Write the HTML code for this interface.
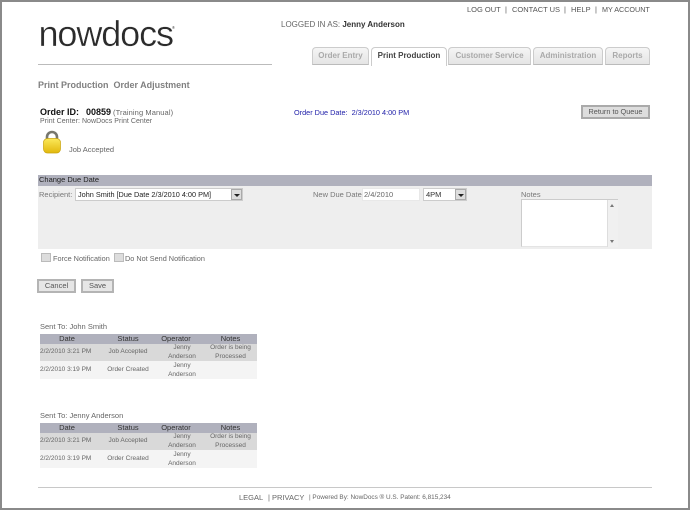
<!DOCTYPE html>
<html><head><meta charset="utf-8"><style>
html,body{margin:0;padding:0;background:#fff}
#p{position:relative;width:690px;height:510px;overflow:hidden;background:#fff;font-family:"Liberation Sans",sans-serif;font-size:7.5px;color:#555;filter:blur(.3px)}
#p div{position:absolute;white-space:nowrap;box-sizing:border-box}
.t{line-height:10px}
.tab{top:47px;height:18px;border:1px solid #ccc;border-bottom:1px solid #bbb;border-radius:4px 4px 0 0;background:linear-gradient(#f5f5f5,#e4e4e4);color:#aaa;font-weight:bold;font-size:8px;text-align:center;line-height:16px}
.btn{background:#e6e6e6;border:2px solid #b4b4b4;color:#555;text-align:center;font-size:7.5px}
.cell{text-align:center;line-height:8.5px;color:#666;font-size:6.5px}
.hd{text-align:center;line-height:10px;color:#333;font-size:7.5px}
.dd{width:11px;height:11px;background:#ddd;border:1px solid #aaa}
.dd:after{content:"";position:absolute;left:2px;top:4px;border-left:3px solid transparent;border-right:3px solid transparent;border-top:3px solid #222}
</style></head><body><div id="p">
<div style="left:0;top:0;width:690px;height:510px;border:2px solid #8a8a8a"></div>

<div style="left:38.5px;top:13px;font-size:36px;line-height:42px;color:#2b2b2b;letter-spacing:-1.1px;-webkit-text-stroke:.35px #fff">nowdocs</div>
<div style="left:172px;top:25px;font-size:4px;line-height:5px;color:#333">®</div>
<div style="left:38px;top:64px;width:234px;height:1px;background:#bbb"></div>

<div class="t" style="left:281px;top:20px;font-size:8px;color:#666">LOGGED IN AS: <b style="color:#333">Jenny Anderson</b></div>
<div class="t" style="left:467px;top:5px;color:#555">LOG OUT</div>
<div class="t" style="left:505px;top:5px;color:#555">|</div>
<div class="t" style="left:512px;top:5px;color:#555">CONTACT US</div>
<div class="t" style="left:564px;top:5px;color:#555">|</div>
<div class="t" style="left:571px;top:5px;color:#555">HELP</div>
<div class="t" style="left:595px;top:5px;color:#555">|</div>
<div class="t" style="left:602px;top:5px;color:#555;font-size:7.2px">MY ACCOUNT</div>

<div class="tab" style="left:312px;width:57px">Order Entry</div>
<div class="tab" style="left:371px;width:76px;height:19px;background:#fff;color:#444;border-bottom:none">Print Production</div>
<div class="tab" style="left:448px;width:83px">Customer Service</div>
<div class="tab" style="left:533px;width:70px">Administration</div>
<div class="tab" style="left:605px;width:45px">Reports</div>

<div class="t" style="left:38px;top:79px;font-size:9px;font-weight:bold;color:#808080;line-height:12px">Print Production &nbsp;Order Adjustment</div>

<div class="t" style="left:40px;top:106px;font-size:9px;font-weight:bold;color:#111;line-height:12px">Order ID:</div>
<div class="t" style="left:86px;top:106px;font-size:9px;font-weight:bold;color:#111;line-height:12px">00859</div>
<div class="t" style="left:113px;top:107px;color:#666;letter-spacing:.1px;line-height:11px">(Training Manual)</div>
<div class="t" style="left:40px;top:117px;font-size:7px;color:#666;letter-spacing:.05px">Print Center: NowDocs Print Center</div>
<div class="t" style="left:294px;top:108px;color:#2222aa;font-size:7.3px">Order Due Date: &nbsp;2/3/2010 4:00 PM</div>
<div class="btn t" style="left:581px;top:105px;width:69px;height:14px;background:#ddd;border-color:#aaa;font-size:7.3px">Return to Queue</div>

<svg style="position:absolute;left:42px;top:130px" width="20" height="24" viewBox="0 0 20 24">
<defs><linearGradient id="g" x1="0" y1="0" x2="0" y2="1"><stop offset="0" stop-color="#fbe95a"/><stop offset="1" stop-color="#e2b80c"/></linearGradient></defs>
<path d="M5 10V7a5 5 0 0 1 10 0v3" fill="none" stroke="#77776e" stroke-width="2.6"/>
<rect x="1.5" y="8.5" width="17" height="14.5" rx="4" fill="url(#g)" stroke="#c9a40f" stroke-width=".7"/>
</svg>
<div class="t" style="left:69px;top:145px;color:#666">Job Accepted</div>

<div style="left:38px;top:175px;width:614px;height:74px;background:#eeeeee"></div>
<div class="t" style="left:38px;top:175px;width:614px;height:10.5px;background:#b0b1bd;color:#222;padding-left:1px">Change Due Date</div>

<div class="t" style="left:39px;top:190px;color:#777">Recipient:</div>
<div style="left:75px;top:188px;width:168px;height:13px;background:#fff;border:1px solid #ccc"></div>
<div class="t" style="left:78px;top:190px;color:#222;font-size:7.3px">John Smith [Due Date 2/3/2010 4:00 PM]</div>
<div class="dd" style="left:231px;top:189px"></div>

<div class="t" style="left:313px;top:190px;color:#777">New Due Date:</div>
<div style="left:362px;top:188px;width:58px;height:13px;background:#fff;border:1px solid #e8e8e8"></div>
<div class="t" style="left:364px;top:190px;color:#666">2/4/2010</div>
<div style="left:423px;top:188px;width:44px;height:13px;background:#fff;border:1px solid #ccc"></div>
<div class="t" style="left:426px;top:190px;color:#333">4PM</div>
<div class="dd" style="left:455px;top:189px"></div>

<div class="t" style="left:521px;top:190px;color:#777">Notes</div>
<div style="left:521px;top:199px;width:97px;height:48px;background:#fff;border:1px solid #ccc;border-bottom-color:#e4e4e4"></div>
<div style="left:607px;top:200px;width:11px;height:47px;background:#f0f0f0;border-left:1px solid #ddd"></div>
<div style="left:610px;top:204px;border-left:2.5px solid transparent;border-right:2.5px solid transparent;border-bottom:3px solid #777"></div>
<div style="left:610px;top:240px;border-left:2.5px solid transparent;border-right:2.5px solid transparent;border-top:3px solid #777"></div>

<div style="left:41px;top:253px;width:10px;height:9px;background:#ddd;border:1px solid #bbb"></div>
<div class="t" style="left:53px;top:254px;color:#666;font-size:7.3px">Force Notification</div>
<div style="left:114px;top:253px;width:10px;height:9px;background:#ddd;border:1px solid #bbb"></div>
<div class="t" style="left:125px;top:254px;color:#666;font-size:7.3px">Do Not Send Notification</div>

<div class="btn t" style="left:37px;top:279px;width:39px;height:14px">Cancel</div>
<div class="btn t" style="left:81px;top:279px;width:33px;height:14px">Save</div>

<div class="t" style="left:40px;top:322px;color:#666">Sent To: John Smith</div>
<div style="left:40px;top:334px;width:217px;height:10px;background:#b0b1bd"></div>
<div style="left:40px;top:344px;width:217px;height:17px;background:#d9d9d9"></div>
<div style="left:40px;top:361px;width:217px;height:18px;background:#f4f4f4"></div>
<div class="hd" style="left:40px;top:334px;width:54px">Date</div>
<div class="hd" style="left:100px;top:334px;width:56px">Status</div>
<div class="hd" style="left:150px;top:334px;width:52px">Operator</div>
<div class="hd" style="left:204px;top:334px;width:53px">Notes</div>
<div class="cell" style="left:40px;top:348px;text-align:left">2/2/2010 3:21 PM</div>
<div class="cell" style="left:100px;top:348px;width:56px">Job Accepted</div>
<div class="cell" style="left:156px;top:344px;width:52px">Jenny<br>Anderson</div>
<div class="cell" style="left:204px;top:344px;width:53px">Order is being<br>Processed</div>
<div class="cell" style="left:40px;top:366px;text-align:left">2/2/2010 3:19 PM</div>
<div class="cell" style="left:100px;top:366px;width:56px">Order Created</div>
<div class="cell" style="left:156px;top:362px;width:52px">Jenny<br>Anderson</div>

<div class="t" style="left:40px;top:411px;color:#666">Sent To: Jenny Anderson</div>
<div style="left:40px;top:423px;width:217px;height:10px;background:#b0b1bd"></div>
<div style="left:40px;top:433px;width:217px;height:17px;background:#d9d9d9"></div>
<div style="left:40px;top:450px;width:217px;height:18px;background:#f4f4f4"></div>
<div class="hd" style="left:40px;top:423px;width:54px">Date</div>
<div class="hd" style="left:100px;top:423px;width:56px">Status</div>
<div class="hd" style="left:150px;top:423px;width:52px">Operator</div>
<div class="hd" style="left:204px;top:423px;width:53px">Notes</div>
<div class="cell" style="left:40px;top:437px;text-align:left">2/2/2010 3:21 PM</div>
<div class="cell" style="left:100px;top:437px;width:56px">Job Accepted</div>
<div class="cell" style="left:156px;top:433px;width:52px">Jenny<br>Anderson</div>
<div class="cell" style="left:204px;top:433px;width:53px">Order is being<br>Processed</div>
<div class="cell" style="left:40px;top:455px;text-align:left">2/2/2010 3:19 PM</div>
<div class="cell" style="left:100px;top:455px;width:56px">Order Created</div>
<div class="cell" style="left:156px;top:451px;width:52px">Jenny<br>Anderson</div>

<div style="left:38px;top:487px;width:614px;height:1px;background:#c8c8c8"></div>
<div class="t" style="left:239px;top:493px;color:#666">LEGAL</div>
<div class="t" style="left:268px;top:493px;color:#666">| PRIVACY</div>
<div class="t" style="left:309px;top:493px;color:#666;font-size:6.4px">| Powered By: NowDocs ® U.S. Patent: 6,815,234</div>
</div></body></html>
